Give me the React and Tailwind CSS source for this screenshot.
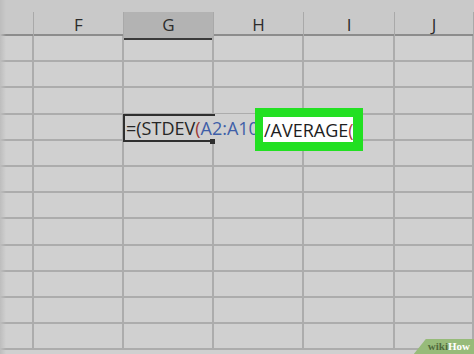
import React from 'react';

const cols = ['', 'F', 'G', 'H', 'I', 'J'];
const rowCount = 12;

export default function App() {
  return (
    <div
      className="relative w-[474px] h-[354px] overflow-hidden bg-[#d0d0d0]"
      style={{ fontFamily: '"Open Sans", "Noto Sans", sans-serif' }}
    >
      <div className="h-[12px] bg-[#c9c9c9]" />
      {/* column headers */}
      <div className="grid grid-cols-[34px_90px_90px_90px_91px_1fr] h-[24px] bg-[#c9c9c9] border-b-2 border-[#8c8c8c]">
        {cols.map((c, i) => (
          <div
            key={i}
            className={`flex items-center justify-center text-[17px] text-[#2c2c2c] border-r border-[#a9a9a9] ${
              c === 'G' ? 'bg-[#b3b3b3] border-b-2 border-b-[#3a3a3a] -mb-[2px]' : ''
            }`}
          >
            {c}
          </div>
        ))}
      </div>
      {/* grid rows */}
      {Array.from({ length: rowCount }).map((_, r) => (
        <div key={r} className="grid grid-cols-[34px_90px_90px_90px_91px_1fr] h-[26.2px] border-b-2 border-[#acacac]">
          {cols.map((c, i) => (
            <div key={i} className="border-r-2 border-[#acacac]" />
          ))}
        </div>
      ))}

      {/* left edge shade */}
      <div className="absolute left-0 top-0 w-[6px] h-full bg-gradient-to-r from-[#bdbdbd] to-transparent" />

      {/* active cell being edited */}
      <div className="absolute left-[123px] top-[114px] w-[132px] h-[28px] bg-[#d0d0d0]" />
      <div className="absolute left-[123px] top-[114px] w-[92px] h-[28px] border-l-2 border-t-2 border-b-2 border-[#2f2f2f]" />
      <div className="absolute left-[210px] top-[139px] w-[5px] h-[5px] bg-[#2f2f2f]" />
      <div className="absolute left-[126px] top-[116px] h-[24px] flex items-center text-[18px] leading-none whitespace-nowrap text-[#262626]">
        <span>=(STDEV</span>
        <span className="text-[#9c3a36]">(</span>
        <span className="text-[#3f5fa8]">A2:A10</span>
      </div>

      {/* highlight */}
      <div className="absolute left-[255px] top-[108px] w-[108px] h-[43px] bg-[#22e022] p-[8px] pt-[9px] pl-[8px]">
        <div className="h-[25px] w-[90px] bg-white flex items-center pl-[1px] text-[18px] leading-none whitespace-nowrap text-[#1e1e1e]">
          <span>/AVERAGE</span>
          <span className="text-[#b0383a]">(</span>
        </div>
      </div>

      {/* watermark */}
      <div className="absolute right-0 bottom-0 h-[15px] pl-[14px] pr-[4px] bg-[#97bb7a] [clip-path:polygon(12px_0,100%_0,100%_100%,0_100%)] flex items-center text-[11px] font-bold leading-none" style={{ fontFamily: '"Liberation Serif", serif' }}>
        <span className="text-[#4f6a3c]">wiki</span>
        <span className="text-white">How</span>
      </div>
    </div>
  );
}
